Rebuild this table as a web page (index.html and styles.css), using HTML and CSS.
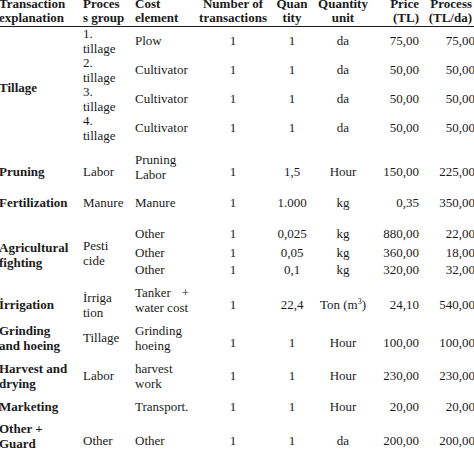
FILE: index.html
```html
<!DOCTYPE html>
<html lang="en">
<head>
<meta charset="utf-8">
<title>Transaction costs</title>
<link rel="stylesheet" href="styles.css">
</head>
<body>
<table class="costs">
  <colgroup>
    <col class="c-expl"><col class="c-grp"><col class="c-cost"><col class="c-num"><col class="c-qty"><col class="c-unit"><col class="c-price"><col class="c-proc">
  </colgroup>
  <thead>
    <tr>
      <th class="l">Transaction<br>explanation</th>
      <th class="l">Proces<br>s group</th>
      <th class="l">Cost<br>element</th>
      <th class="c">Number of<br>transactions</th>
      <th class="c">Quan<br>tity</th>
      <th class="c">Quantity<br>unit</th>
      <th class="r">Price<br>(TL)</th>
      <th class="r last">Process<br>(TL/da)</th>
    </tr>
  </thead>
  <tbody>
    <tr class="till">
      <td class="lab" rowspan="4">Tillage</td>
      <td class="grp">1.<br>tillage</td>
      <td>Plow</td><td class="c">1</td><td class="c">1</td><td class="c">da</td><td class="r">75,00</td><td class="r">75,00</td>
    </tr>
    <tr class="till">
      <td class="grp">2.<br>tillage</td>
      <td>Cultivator</td><td class="c">1</td><td class="c">1</td><td class="c">da</td><td class="r">50,00</td><td class="r">50,00</td>
    </tr>
    <tr class="till">
      <td class="grp">3.<br>tillage</td>
      <td>Cultivator</td><td class="c">1</td><td class="c">1</td><td class="c">da</td><td class="r">50,00</td><td class="r">50,00</td>
    </tr>
    <tr class="till">
      <td class="grp">4.<br>tillage</td>
      <td>Cultivator</td><td class="c">1</td><td class="c">1</td><td class="c">da</td><td class="r">50,00</td><td class="r">50,00</td>
    </tr>
    <tr class="prun">
      <td class="lab">Pruning</td>
      <td>Labor</td>
      <td class="cost">Pruning<br>Labor</td>
      <td class="c">1</td><td class="c">1,5</td><td class="c">Hour</td><td class="r">150,00</td><td class="r">225,00</td>
    </tr>
    <tr class="fert">
      <td class="lab">Fertilization</td>
      <td>Manure</td>
      <td>Manure</td>
      <td class="c">1</td><td class="c">1.000</td><td class="c">kg</td><td class="r">0,35</td><td class="r">350,00</td>
    </tr>
    <tr class="o1">
      <td class="lab" rowspan="3">Agricultural<br>fighting</td>
      <td class="grp" rowspan="3">Pesti<br>cide</td>
      <td>Other</td><td class="c">1</td><td class="c">0,025</td><td class="c">kg</td><td class="r">880,00</td><td class="r">22,00</td>
    </tr>
    <tr class="o2">
      <td>Other</td><td class="c">1</td><td class="c">0,05</td><td class="c">kg</td><td class="r">360,00</td><td class="r">18,00</td>
    </tr>
    <tr class="o3">
      <td>Other</td><td class="c">1</td><td class="c">0,1</td><td class="c">kg</td><td class="r">320,00</td><td class="r">32,00</td>
    </tr>
    <tr class="irr">
      <td class="lab">İrrigation</td>
      <td class="grp">İrriga<br>tion</td>
      <td class="cost"><span class="just"><span>Tanker</span><span>+</span></span>water cost</td>
      <td class="c">1</td><td class="c">22,4</td><td class="c">Ton (m<sup>3</sup>)</td><td class="r">24,10</td><td class="r">540,00</td>
    </tr>
    <tr class="grind">
      <td class="lab">Grinding<br>and hoeing</td>
      <td class="grp">Tillage</td>
      <td class="cost">Grinding<br>hoeing</td>
      <td class="c">1</td><td class="c">1</td><td class="c">Hour</td><td class="r">100,00</td><td class="r">100,00</td>
    </tr>
    <tr class="harv">
      <td class="lab">Harvest and<br>drying</td>
      <td class="grp">Labor</td>
      <td class="cost">harvest<br>work</td>
      <td class="c">1</td><td class="c">1</td><td class="c">Hour</td><td class="r">230,00</td><td class="r">230,00</td>
    </tr>
    <tr class="mkt">
      <td class="lab">Marketing</td>
      <td></td>
      <td>Transport.</td>
      <td class="c">1</td><td class="c">1</td><td class="c">Hour</td><td class="r">20,00</td><td class="r">20,00</td>
    </tr>
    <tr class="oth">
      <td class="lab">Other +<br>Guard</td>
      <td>Other</td>
      <td>Other</td>
      <td class="c">1</td><td class="c">1</td><td class="c">da</td><td class="r">200,00</td><td class="r">200,00</td>
    </tr>
  </tbody>
</table>
</body>
</html>
```

FILE: styles.css
```css
html, body {
  margin: 0;
  padding: 0;
  background: #ffffff;
  overflow: hidden;
}

body {
  width: 474px;
  height: 452px;
  font-family: "Liberation Serif", "Times New Roman", serif;
  font-size: 13px;
  color: #1b1b1b;
}

.costs {
  table-layout: fixed;
  width: 476px;
  margin: -3px 0 0 -1px;
  border-collapse: separate;
  border-spacing: 0;
}

.c-expl { width: 84px; }
.c-grp { width: 52px; }
.c-cost { width: 63px; }
.c-num { width: 70px; }
.c-qty { width: 48px; }
.c-unit { width: 54px; }
.c-price { width: 49px; }
.c-proc { width: 56px; }

.costs th {
  font-weight: bold;
  line-height: 14px;
  padding: 0 0 1px 0;
  vertical-align: top;
  white-space: nowrap;
  border-bottom: 1px solid #1b1b1b;
}

.costs td {
  line-height: 14.5px;
  padding: 0;
  vertical-align: top;
  white-space: nowrap;
}

.costs .l { text-align: left; }
.costs .c { text-align: center; }
.costs .r { text-align: right; }
.costs th.last { padding-right: 3px; }

.costs td.lab { font-weight: bold; }

.costs sup {
  font-size: 8px;
  line-height: 0;
  vertical-align: 5px;
}

.just {
  display: flex;
  justify-content: space-between;
  width: 54px;
}

/* Tillage block */
.till { height: 29px; }
.till td { padding-top: 7px; }
.till td.grp { padding-top: 0; }
.till td.lab { padding-top: 54px; }

/* Pruning */
.prun { height: 47px; }
.prun td { padding-top: 22px; }
.prun td.cost { padding-top: 10px; }

/* Fertilization */
.fert { height: 22px; }
.fert td { padding-top: 6px; }

/* Agricultural fighting */
.o1 { height: 32px; }
.o1 td { padding-top: 15px; }
.o1 td.lab { padding-top: 29px; }
.o1 td.grp { padding-top: 27px; }
.o2 { height: 17px; }
.o2 td { padding-top: 2px; }
.o3 { height: 19px; }
.o3 td { padding-top: 2px; }

/* Irrigation */
.irr { height: 40px; }
.irr td { padding-top: 18px; }
.irr td.cost { padding-top: 6px; }
.irr td.grp { padding-top: 11px; }

/* Grinding and hoeing */
.grind { height: 36px; }
.grind td { padding-top: 16px; }
.grind td.lab, .grind td.cost { padding-top: 4px; }
.grind td.grp { padding-top: 11px; }

/* Harvest and drying */
.harv { height: 36px; }
.harv td { padding-top: 13px; }
.harv td.lab, .harv td.cost { padding-top: 6px; }

/* Marketing */
.mkt { height: 28px; }
.mkt td { padding-top: 8px; }

/* Other + Guard */
.oth { height: 40px; }
.oth td { padding-top: 14px; }
.oth td.lab { padding-top: 2px; }
```
